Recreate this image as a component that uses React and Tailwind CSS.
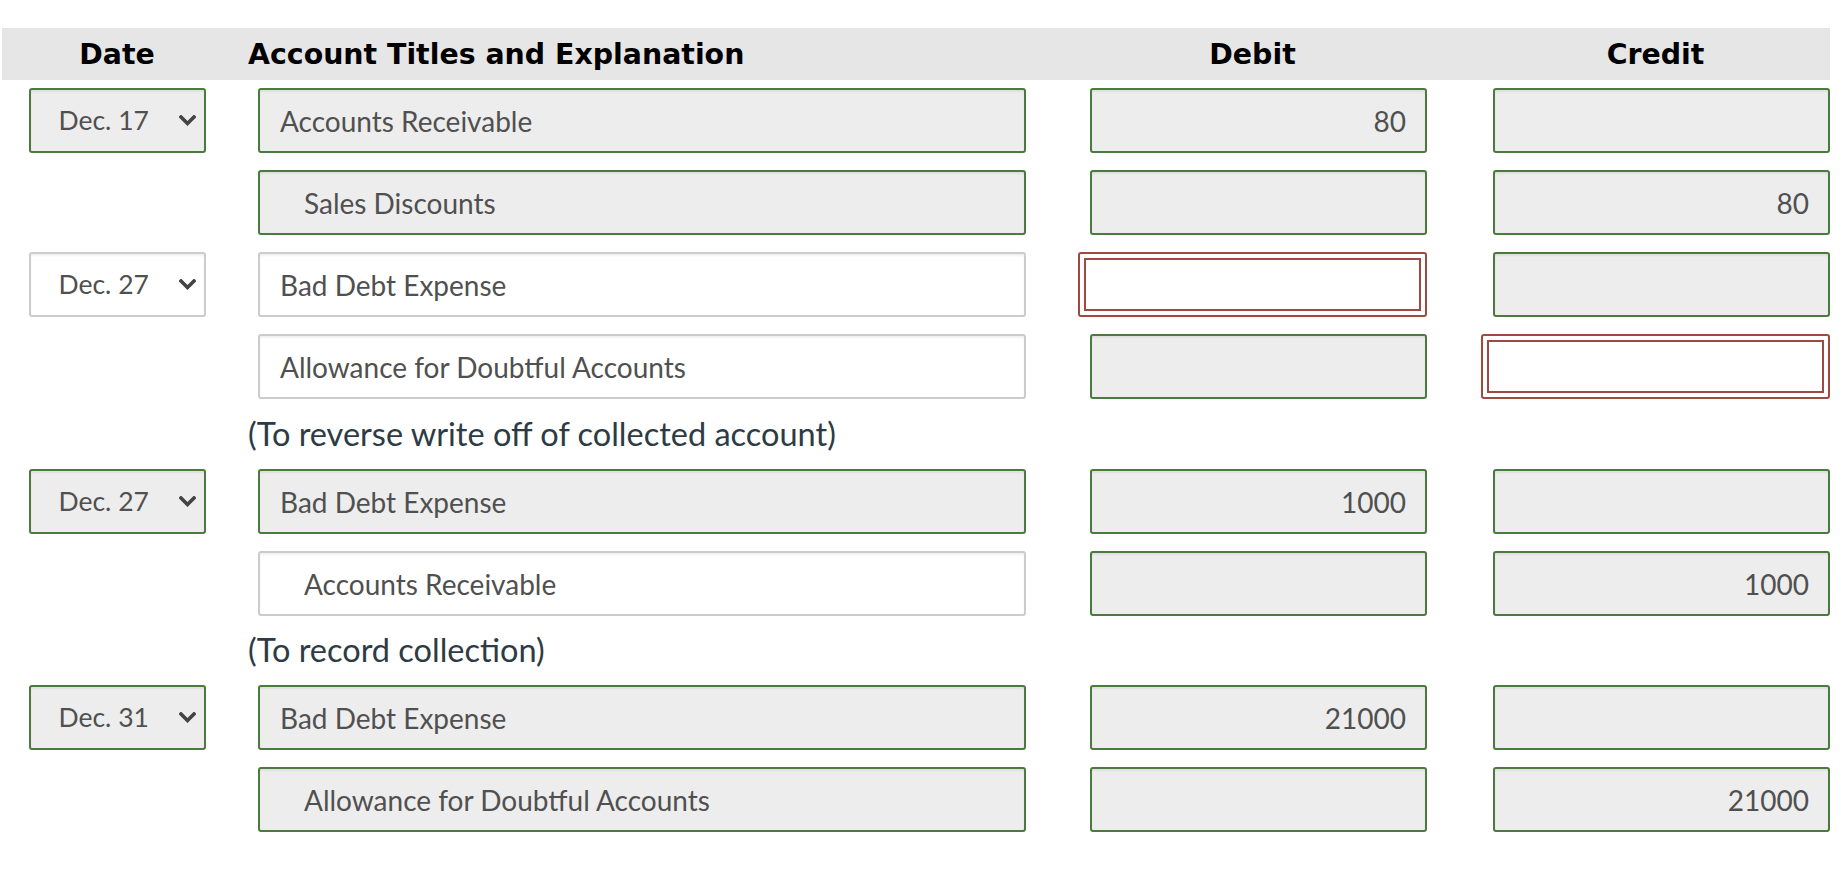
const rows = [
  { date: "Dec. 17", dateOk: true, account: "Accounts Receivable", accOk: true, debit: "80", credit: "" },
  { account: "Sales Discounts", indent: true, accOk: true, debit: "", credit: "80" },
  { date: "Dec. 27", dateOk: false, account: "Bad Debt Expense", accOk: false, debitErr: true, credit: "" },
  { account: "Allowance for Doubtful Accounts", accOk: false, debit: "", creditErr: true },
  { note: "(To reverse write off of collected account)", h: "h-[36px]" },
  { date: "Dec. 27", dateOk: true, account: "Bad Debt Expense", accOk: true, debit: "1000", credit: "" },
  { account: "Accounts Receivable", indent: true, accOk: false, debit: "", credit: "1000" },
  { note: "(To record collection)", h: "h-[35px]" },
  { date: "Dec. 31", dateOk: true, account: "Bad Debt Expense", accOk: true, debit: "21000", credit: "" },
  { account: "Allowance for Doubtful Accounts", indent: true, accOk: true, debit: "", credit: "21000" },
];

const font = { fontFamily: "Lato, 'Open Sans', sans-serif" };
const headFont = { fontFamily: "'DejaVu Sans', Verdana, sans-serif" };

function Box({ ok = true, className = "", children }) {
  const look = ok
    ? "border-[#4a7a3e] bg-[#ededed]"
    : "border-[#cccccc] bg-white";
  return (
    <div
      className={`h-[65px] flex items-center border-2 rounded-[3px] shadow-[inset_0_2px_2px_rgba(0,0,0,0.06)] text-[28px] text-[#505050] ${look} ${className}`}
    >
      {children}
    </div>
  );
}

function ErrorBox() {
  return (
    <div className="h-[65px] w-[349px] border-2 border-[#a04842] rounded-[3px] p-[4px] bg-white">
      <div className="h-full w-full border-2 border-[#a04842] bg-white"></div>
    </div>
  );
}

function Chevron() {
  return (
    <svg width="17" height="11" viewBox="0 0 17 11" className="shrink-0">
      <path d="M2 2 L8.5 8.5 L15 2" fill="none" stroke="#444" strokeWidth="3.6" strokeLinecap="square" />
    </svg>
  );
}

function EntryRow({ row }) {
  return (
    <div className="flex">
      <div className="w-[230px] flex justify-center">
        {row.date && (
          <Box ok={row.dateOk} className="w-[177px] pl-[28px] pr-[8px] justify-between">
            <span className="text-[26.5px]">{row.date}</span>
            <Chevron />
          </Box>
        )}
      </div>
      <div className="w-[846px] pl-[26px]">
        <Box ok={row.accOk} className={`w-[768px] ${row.indent ? "pl-[44px]" : "pl-[20px]"}`}>
          {row.account}
        </Box>
      </div>
      <div className="w-[403px]">
        {row.debitErr ? (
          <ErrorBox />
        ) : (
          <div className="pl-[12px] w-[349px]">
            <Box className="justify-end pr-[19px]">{row.debit}</Box>
          </div>
        )}
      </div>
      <div className="w-[349px]">
        {row.creditErr ? (
          <ErrorBox />
        ) : (
          <div className="pl-[12px]">
            <Box className="justify-end pr-[19px]">{row.credit}</Box>
          </div>
        )}
      </div>
    </div>
  );
}

export default function App() {
  return (
    <div className="min-h-screen bg-white pt-[28px] pl-[2px]" style={font}>
      {/* Header */}
      <div
        className="flex w-[1828px] h-[52px] pt-[2px] bg-[#e6e6e6] items-center text-[28.4px] font-bold text-black"
        style={headFont}
      >
        <div className="w-[230px] text-center">Date</div>
        <div className="w-[846px] pl-[16px]">Account Titles and Explanation</div>
        <div className="w-[403px]">
          <div className="w-[349px] text-center">Debit</div>
        </div>
        <div className="w-[349px] text-center">Credit</div>
      </div>

      {/* Journal rows */}
      <div className="mt-[8px] flex flex-col gap-[17px]">
        {rows.map((row, i) =>
          row.note ? (
            <div key={i} className={`${row.h} flex items-center pl-[246px] text-[32.5px] text-[#2d3b45]`}>
              {row.note}
            </div>
          ) : (
            <EntryRow key={i} row={row} />
          )
        )}
      </div>
    </div>
  );
}
